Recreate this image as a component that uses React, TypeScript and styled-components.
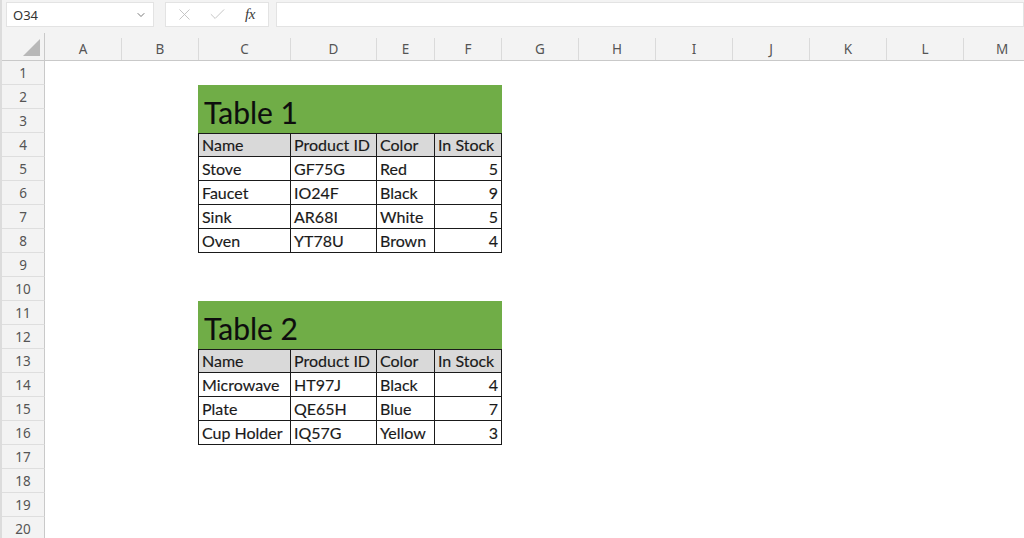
import React from 'react';
import styled, { createGlobalStyle } from 'styled-components';
import { X, Check, ChevronDown } from 'lucide-react';

const GlobalStyle = createGlobalStyle`
	html, body {
		margin: 0;
		padding: 0;
		overflow: hidden;
	}
	body {
		font-family: "Noto Sans", "Open Sans", sans-serif;
	}
`;

const colWidths = [77, 77, 92, 86, 58, 67, 77, 77, 77, 77, 77, 77, 77];
const colNames = ['A', 'B', 'C', 'D', 'E', 'F', 'G', 'H', 'I', 'J', 'K', 'L', 'M'];
const rowCount = 20;

const Frame = styled.div`
	display: flex;
	flex-direction: column;
	width: 1024px;
	height: 538px;
	background: #f3f3f3;
	overflow: hidden;
	border-left: 2px solid #dcdcdc;
	box-sizing: border-box;
`;

const FormulaBar = styled.div`
	display: flex;
	align-items: flex-start;
	height: 33px;
	padding: 2px 0 0 4px;
	box-sizing: border-box;
	flex-shrink: 0;
`;

const Box = styled.div<{ $width?: number; $gap?: number }>`
	display: flex;
	align-items: center;
	height: 25px;
	box-sizing: border-box;
	background: #ffffff;
	border: 1px solid #e3e3e3;
	margin-left: ${p => p.$gap ?? 0}px;
	${p => (p.$width ? `width: ${p.$width}px;` : 'flex: 1;')}
`;

const NameText = styled.span`
	flex: 1;
	padding-left: 6px;
	font-size: 13px;
	color: #333;
`;

const Chevron = styled.span`
	display: flex;
	margin-right: 6px;
	color: #555;
`;

const FxIcons = styled.div`
	display: flex;
	align-items: center;
	gap: 14px;
	padding-left: 9px;
	color: #bdbdbd;
`;

const Fx = styled.span`
	margin-left: 4px;
	font-family: "Liberation Serif", serif;
	font-style: italic;
	font-size: 15px;
	color: #3a3a3a;
	letter-spacing: -0.5px;
`;

const Sheet = styled.div`
	display: grid;
	grid-template-columns: 43px ${colWidths.map(w => `${w}px`).join(' ')};
	grid-template-rows: 28px repeat(${rowCount}, 24px);
	flex: 1;
	overflow: hidden;
`;

const Corner = styled.div`
	grid-column: 1;
	grid-row: 1;
	display: flex;
	align-items: flex-end;
	justify-content: flex-end;
	padding: 0 4px 4px 0;
	border-right: 1px solid #c9c9c9;
	border-bottom: 1px solid #c9c9c9;
	box-sizing: border-box;
`;

const ColHeader = styled.div<{ $col: number }>`
	grid-column: ${p => p.$col};
	grid-row: 1;
	display: flex;
	align-items: flex-end;
	border-bottom: 1px solid #c9c9c9;
	box-sizing: border-box;
`;

const ColLabel = styled.div`
	flex: 1;
	height: 22px;
	display: flex;
	align-items: center;
	justify-content: center;
	border-right: 1px solid #dadada;
	font-size: 13.5px;
	color: #555;
`;

const RowHeader = styled.div<{ $row: number }>`
	grid-column: 1;
	grid-row: ${p => p.$row};
	display: flex;
	align-items: center;
	justify-content: center;
	border-right: 1px solid #c9c9c9;
	border-bottom: 1px solid #dedede;
	box-sizing: border-box;
	font-size: 13.5px;
	color: #555;
`;

const Body = styled.div`
	grid-column: 2 / -1;
	grid-row: 2 / -1;
	background: #ffffff;
`;

const Table = styled.div<{ $rowStart: number; $rowEnd: number }>`
	grid-column: 4 / 8;
	grid-row: ${p => p.$rowStart} / ${p => p.$rowEnd};
	display: grid;
	grid-template-columns: 93px 86px 58px 67px;
	grid-template-rows: 48px;
	grid-auto-rows: 24px;
	margin-left: -1px;
	font-family: Lato, "Liberation Sans", sans-serif;
	font-size: 16px;
	color: #1a1a1a;
	-webkit-text-stroke: 0.15px #1a1a1a;
`;

const Title = styled.div`
	grid-column: 1 / -1;
	background: #70ad47;
	display: flex;
	align-items: flex-end;
	padding: 0 0 6px 6px;
	font-size: 30px;
	line-height: 1;
	color: #0d0d0d;
`;

const Cell = styled.div<{ $head?: boolean; $first?: boolean; $num?: boolean }>`
	display: flex;
	align-items: flex-end;
	justify-content: ${p => (p.$num ? 'flex-end' : 'flex-start')};
	padding: 0 3px 3px 3px;
	box-sizing: border-box;
	background: ${p => (p.$head ? '#d9d9d9' : '#ffffff')};
	border-right: 1px solid #1a1a1a;
	border-bottom: 1px solid #1a1a1a;
	border-left: ${p => (p.$first ? '1px solid #1a1a1a' : 'none')};
	border-top: ${p => (p.$head ? '1px solid #1a1a1a' : 'none')};
	white-space: nowrap;
	line-height: 1;
`;

type Item = [string, string, string, number];

const heads = ['Name', 'Product ID', 'Color', 'In Stock'];

const table1: Item[] = [
	['Stove', 'GF75G', 'Red', 5],
	['Faucet', 'IO24F', 'Black', 9],
	['Sink', 'AR68I', 'White', 5],
	['Oven', 'YT78U', 'Brown', 4],
];

const table2: Item[] = [
	['Microwave', 'HT97J', 'Black', 4],
	['Plate', 'QE65H', 'Blue', 7],
	['Cup Holder', 'IQ57G', 'Yellow', 3],
];

type StockTableProps = {
	title: string;
	firstRow: number;
	items: Item[];
};

// firstRow is the spreadsheet row number where the green title starts
const StockTable: React.FC<StockTableProps> = ({ title, firstRow, items }) => {
	const start = firstRow + 1;
	const end = start + 3 + items.length;
	return (
		<Table $rowStart={start} $rowEnd={end}>
			<Title>{title}</Title>
			{heads.map((h, i) => (
				<Cell key={h} $head $first={i === 0}>{h}</Cell>
			))}
			{items.map(row => (
				<React.Fragment key={row[0]}>
					<Cell $first>{row[0]}</Cell>
					<Cell>{row[1]}</Cell>
					<Cell>{row[2]}</Cell>
					<Cell $num>{row[3]}</Cell>
				</React.Fragment>
			))}
		</Table>
	);
};

const App: React.FC = () => {
	return (
		<Frame>
			<GlobalStyle />
			<FormulaBar>
				<Box $width={148}>
					<NameText>O34</NameText>
					<Chevron><ChevronDown size={12} strokeWidth={1.6} /></Chevron>
				</Box>
				<Box $width={104} $gap={11}>
					<FxIcons>
						<X size={19} strokeWidth={1.1} />
						<Check size={19} strokeWidth={1.1} />
						<Fx>fx</Fx>
					</FxIcons>
				</Box>
				<Box $gap={7} />
			</FormulaBar>
			<Sheet>
				<Corner>
					<svg width="17" height="17" viewBox="0 0 17 17">
						<polygon points="17,0 17,17 0,17" fill="#b8b8b8" />
					</svg>
				</Corner>
				{colNames.map((c, i) => (
					<ColHeader key={c} $col={i + 2}>
						<ColLabel>{c}</ColLabel>
					</ColHeader>
				))}
				{Array.from({ length: rowCount }, (_, i) => (
					<RowHeader key={i} $row={i + 2}>{i + 1}</RowHeader>
				))}
				<Body />
				<StockTable title="Table 1" firstRow={2} items={table1} />
				<StockTable title="Table 2" firstRow={11} items={table2} />
			</Sheet>
		</Frame>
	);
};

export default App;
